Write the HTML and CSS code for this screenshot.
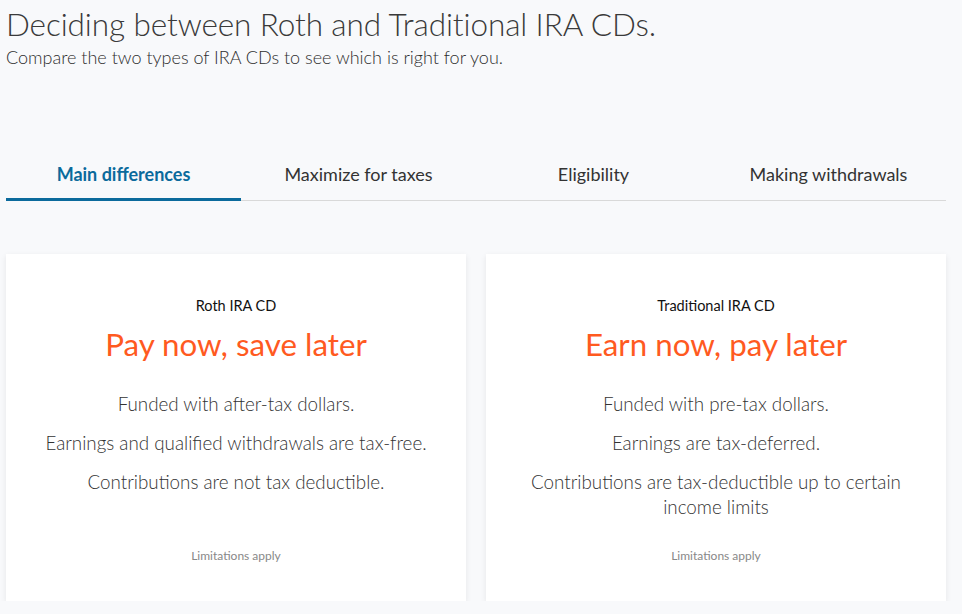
FILE: index.html
```html
<!DOCTYPE html>
<html>
<head>
<meta charset="utf-8">
<link rel="stylesheet" href="styles.css">
</head>
<body>
<div class="page">
  <header class="intro">
    <h1 class="title">Deciding between Roth and Traditional IRA CDs.</h1>
    <p class="subtitle">Compare the two types of IRA CDs to see which is right for you.</p>
  </header>
  <nav class="tabs">
    <div class="tab active">Main differences</div>
    <div class="tab">Maximize for taxes</div>
    <div class="tab">Eligibility</div>
    <div class="tab">Making withdrawals</div>
  </nav>
  <section class="cards">
    <article class="card">
      <div class="label">Roth IRA CD</div>
      <h2 class="headline">Pay now, save later</h2>
      <p class="line">Funded with after-tax dollars.</p>
      <p class="line">Earnings and qualified withdrawals are tax-free.</p>
      <p class="line">Contributions are not tax deductible.</p>
      <div class="note">Limitations apply</div>
    </article>
    <article class="card">
      <div class="label">Traditional IRA CD</div>
      <h2 class="headline">Earn now, pay later</h2>
      <p class="line">Funded with pre-tax dollars.</p>
      <p class="line">Earnings are tax-deferred.</p>
      <p class="line">Contributions are tax-deductible up to certain income limits</p>
      <div class="note">Limitations apply</div>
    </article>
  </section>
</div>
</body>
</html>
```

FILE: styles.css
```css
html, body {
  margin: 0;
  padding: 0;
  background: #f8f9fb;
}
body {
  font-family: Lato, "Noto Sans", sans-serif;
  color: #333;
}
.page {
  padding: 0 16px 0 6px;
}
.intro {
  padding-top: 4px;
}
.title {
  margin: 0;
  font-size: 31.5px;
  font-weight: 300;
  line-height: 40px;
  color: #3a3a3a;
  letter-spacing: -0.1px;
}
.subtitle {
  margin: 2px 0 0 0;
  font-size: 18px;
  font-weight: 300;
  line-height: 22px;
  color: #2e2e2e;
}
.tabs {
  display: grid;
  grid-template-columns: repeat(4, 1fr);
  margin-top: 83px;
  border-bottom: 1px solid #d9d9d9;
}
.tab {
  text-align: center;
  font-size: 18px;
  line-height: 24px;
  padding: 11px 0 12px;
  color: #333;
  border-bottom: 3px solid transparent;
  margin-bottom: -1px;
}
.tab.active {
  color: #0b6a9c;
  font-weight: 700;
  border-bottom-color: #0b6a9c;
}
.cards {
  display: grid;
  grid-template-columns: 1fr 1fr;
  gap: 20px;
  margin-top: 53px;
}
.card {
  background: #fff;
  box-shadow: 0 2px 6px rgba(0, 0, 0, 0.08);
  height: 347px;
  box-sizing: border-box;
  padding: 42px 30px 0;
  text-align: center;
  display: flex;
  flex-direction: column;
  align-items: center;
}
.label {
  font-size: 14.5px;
  line-height: 20px;
  color: #111;
}
.headline {
  margin: 8px 0 0;
  font-size: 31.3px;
  font-weight: 400;
  line-height: 40px;
  color: #ff5a1f;
}
.line {
  margin: 0;
  font-size: 18.8px;
  line-height: 25px;
  color: #333;
  font-weight: 300;
}
.headline + .line {
  margin-top: 27px;
}
.line + .line {
  margin-top: 14px;
}
.note {
  margin-top: auto;
  margin-bottom: 38px;
  font-size: 12px;
  color: #888;
}
```
